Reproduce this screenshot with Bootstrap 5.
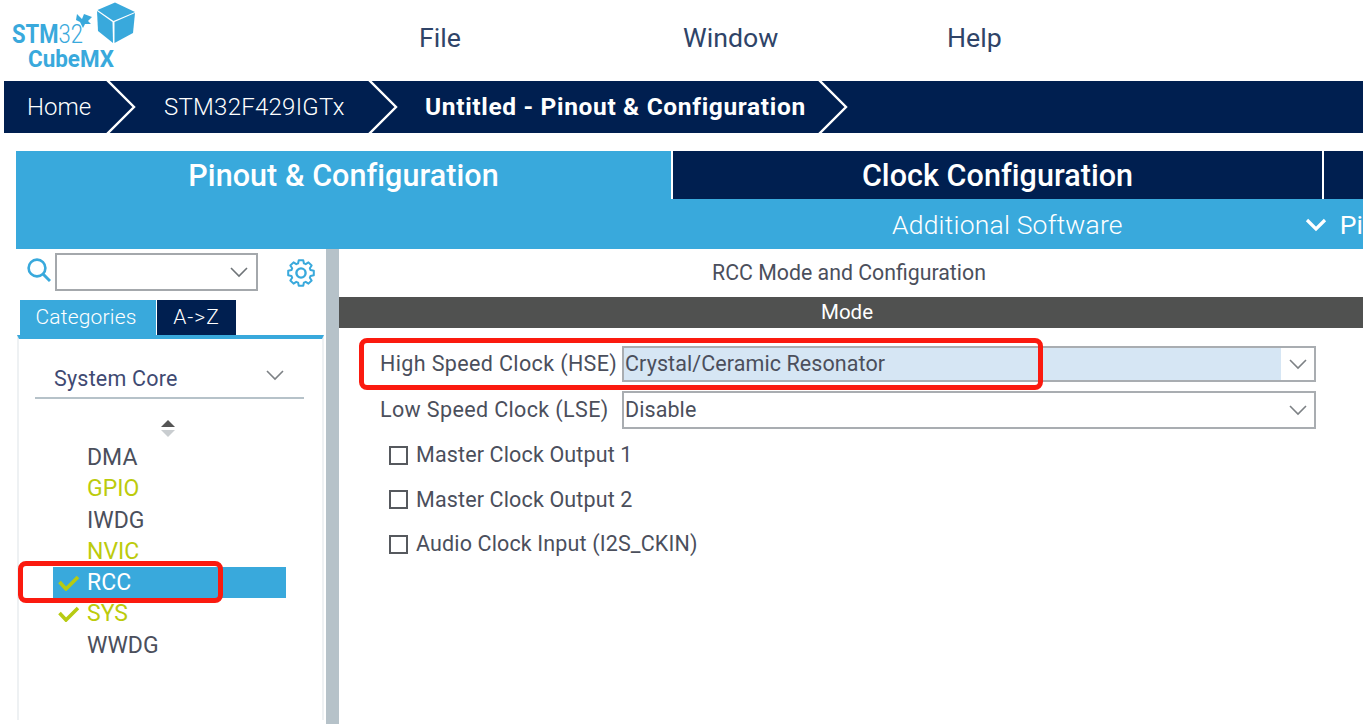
<!DOCTYPE html>
<html lang="en">
<head>
    <meta charset="UTF-8">
    <meta name="viewport" content="width=device-width, initial-scale=1.0">
    <title>STM32CubeMX</title>
    <link href="https://cdn.jsdelivr.net/npm/bootstrap@5.3.0/dist/css/bootstrap.min.css" rel="stylesheet">
    <style>
        html, body { height: 100%; overflow: hidden; }
        body { background: #fff; font-family: Roboto, "Liberation Sans", sans-serif; color: #4b4f5c; }
        .app-head { height: 81px; }
        .logo-box { width: 140px; height: 81px; margin-left: 8px; flex: none; }
        .menu-item { font-size: 26.7px; color: #2f4468; position: absolute; top: 19px; line-height: 38px; }
        .menu-bar { position: relative; flex: 1; }
        .crumbs { height: 52px; margin-left: 4px; background: #001f50; color: #fff; font-size: 24px; font-weight: 300; line-height: 52px; overflow: hidden; }
        .crumb { display: flex; align-items: stretch; flex: none; white-space: nowrap; }
        .crumb svg { display: block; flex: none; width: 30px; height: 52px; }
        .crumb-home { padding-left: 23px; width: 102px; }
        .crumb-chip { padding-left: 28px; width: 232px; letter-spacing: .25px; }
        .crumb-active { font-weight: 700; font-size: 24.5px; letter-spacing: .66px; }
        .crumb-title { padding-left: 27px; width: 420px; }
        .main-tabs { margin: 18px 0 0 16px; height: 48px; font-size: 30.5px; font-weight: 500; color: #fff; line-height: 49px; letter-spacing: .05px; overflow: hidden; }
        .tab-on { width: 655px; background: #39a9dc; text-align: center; flex: none; }
        .tab-off { background: #001f50; text-align: center; flex: none; margin-left: 2px; }
        .tab-clock { width: 649px; }
        .tab-rest { flex: 1; }
        .sub-tabs { margin-left: 16px; height: 50px; padding-top: 2px; background: #39a9dc; color: #fff; font-size: 26.5px; overflow: hidden; }
        .sub-label { margin-left: 876px; white-space: nowrap; font-weight: 300; letter-spacing: .2px; }
        .sub-pi { margin-left: 13px; white-space: nowrap; }
        .sub-chev { width: 22px; height: 14px; margin-left: 182px; flex: none; }
        .work { margin-left: 16px; height: 475px; }
        .side { width: 310px; flex: none; }
        .side-gutter { width: 13px; flex: none; background: #b6c2c9; }
        .side-top { height: 51px; padding: 4px 0 0 11px; }
        .combo { width: 203px; height: 38px; margin-left: 4px; border: 2px solid #a4a8ac; }
        .gear { margin-left: 29px; margin-top: 6px; flex: none; }
        .side-tabs { height: 35px; margin-left: 4px; font-size: 21px; line-height: 35px; color: #fff; font-weight: 300; }
        .side-tab-a { width: 136px; background: #39a9dc; text-align: center; letter-spacing: .2px; padding-right: 4px; }
        .side-tab-b { width: 79px; background: #001f50; text-align: center; margin-left: 1px; letter-spacing: 1px; }
        .side-body { margin-left: 1px; margin-right: 2px; border-top: 4px solid #39a9dc; border-left: 2px solid #eef1f3; border-right: 2px solid #eef1f3; height: 385px; }
        .group-line { margin: 21px 18px 0 16px; height: 39px; border-bottom: 2px solid #b6c2c9; padding-left: 19px; font-size: 21.5px; line-height: 37px; color: #3f4a72; letter-spacing: .2px; }
        .group-chev { margin: 10px 20px 0 0; }
        .sort-arrows { margin: 21px 0 0 142px; display: block; }
        .items { margin: 5px 0 0 0; font-size: 23px; line-height: 31.3px; }
        .item { height: 31.3px; padding-left: 68px; position: relative; width: 267px; }
        .item-on { margin-left: 34px; padding-left: 34px; width: 233px; background: #39a9dc; color: #fff; }
        .item-lime { color: #bccb0c; }
        .item-check { position: absolute; left: 5px; top: 8px; }
        .item-check-off { left: 39px; }
        .panel { flex: 1; min-width: 0; }
        .panel-title { height: 48px; line-height: 48px; font-size: 21.3px; font-weight: 400; text-align: center; padding-right: 4px; }
        .mode-bar { height: 31px; background: #505150; color: #fff; text-align: center; font-size: 20.5px; line-height: 31px; padding-right: 8px; }
        .cfg-rows { padding: 18px 0 0 41px; font-size: 21.5px; letter-spacing: .37px; }
        .cfg-row { height: 36px; margin-bottom: 9px; }
        .cfg-row-low { height: 38px; margin-bottom: 0; }
        .cfg-label { width: 242px; flex: none; white-space: nowrap; line-height: 36px; }
        .cfg-row-low .cfg-label { line-height: 38px; }
        .cfg-select { width: 694px; flex: none; border: 2px solid #a9adb1; display: flex; align-items: center; }
        .cfg-value { flex: 1; height: 100%; padding-left: 1px; line-height: 32px; white-space: nowrap; letter-spacing: .08px; }
        .cfg-row-low .cfg-value { line-height: 34px; }
        .cfg-value-on { background: #d6e6f4; }
        .cfg-arrow { width: 33px; flex: none; }
        .cfg-arrow svg { display: block; margin: 0 auto; }
        .cfg-checks { padding-top: 4px; letter-spacing: .14px; }
        .cfg-check { height: 44.5px; padding-left: 9px; gap: 8px; }
        .cfg-box { width: 19px; height: 19px; border: 2px solid #56595e; flex: none; }
        .mark-red { position: absolute; border: 5px solid #fb1a0f; border-radius: 8px; pointer-events: none; }
        .mark-rcc { left: 18px; top: 561px; width: 205px; height: 42px; }
        .mark-hse { left: 359px; top: 338px; width: 684px; height: 52px; }
    </style>
</head>
<body>
    <header class="app-head d-flex">
        <div class="logo-box">
            <svg width="130" height="75" viewBox="0 0 130 75" role="img" aria-label="STM32 CubeMX">
                <text x="4" y="43" fill="#39a9dc" font-family="Roboto" font-size="25" textLength="71" lengthAdjust="spacingAndGlyphs"><tspan font-weight="700">STM</tspan><tspan font-weight="300">32</tspan></text>
                <text x="20" y="67" fill="#39a9dc" font-family="Roboto" font-size="24" font-weight="700" textLength="86" lengthAdjust="spacingAndGlyphs">CubeMX</text>
                <path d="M69 14 L74 19 L76 14 L84 17 L80 21 L83 24 L77 24 L75 28 L72 22 L68 20 Z" fill="#39a9dc"/>
                <path d="M89.5 10 L107 2.500 L127 12 L105.500 21 Z" fill="#39a9dc"/>
                <path d="M89 11 L104.500 22 L105 43 L90 31 Z" fill="#39a9dc"/>
                <path d="M106.500 22 L127 13 L125 33 L106.500 43 Z" fill="#39a9dc"/>
            </svg>
        </div>
        <nav class="menu-bar">
            <span class="menu-item" style="left:271px">File</span>
            <span class="menu-item" style="left:535px">Window</span>
            <span class="menu-item" style="left:799px">Help</span>
        </nav>
    </header>

    <nav class="crumbs d-flex">
        <div class="crumb"><span class="crumb-home">Home</span>
            <svg viewBox="0 0 30 52"><path d="M1 -1 L28 26 L1 53" fill="none" stroke="#fff" stroke-width="2.4"/></svg></div>
        <div class="crumb"><span class="crumb-chip">STM32F429IGTx</span>
            <svg viewBox="0 0 30 52"><path d="M1 -1 L28 26 L1 53" fill="none" stroke="#fff" stroke-width="2.4"/></svg></div>
        <div class="crumb crumb-active"><span class="crumb-title">Untitled - Pinout &amp; Configuration</span>
            <svg viewBox="0 0 30 52"><path d="M1 -1 L28 26 L1 53" fill="none" stroke="#fff" stroke-width="2.4"/></svg></div>
    </nav>

    <div class="main-tabs d-flex">
        <div class="tab-on">Pinout &amp; Configuration</div>
        <div class="tab-off tab-clock">Clock Configuration</div>
        <div class="tab-off tab-rest"></div>
    </div>
    <div class="sub-tabs d-flex align-items-center">
        <span class="sub-label">Additional Software</span>
        <svg class="sub-chev" viewBox="0 0 22 14"><path d="M2 2 L11 11 L20 2" fill="none" stroke="#fff" stroke-width="3.2"/></svg>
        <span class="sub-pi">Pinout</span>
    </div>

    <div class="work d-flex">
        <aside class="side">
            <div class="side-top d-flex align-items-start">
                <svg width="24" height="27" viewBox="0 0 24 27" class="mt-1 flex-shrink-0"><circle cx="10" cy="11" r="8.4" fill="none" stroke="#39a9dc" stroke-width="2.6"/><path d="M16 17 L23 24" stroke="#39a9dc" stroke-width="3"/></svg>
                <div class="combo d-flex align-items-center justify-content-end pe-2">
                    <svg width="18" height="11" viewBox="0 0 18 11"><path d="M1 1 L9 9 L17 1" fill="none" stroke="#6f7478" stroke-width="1.6"/></svg>
                </div>
                <svg class="gear" width="28" height="28" viewBox="0 0 28 28"><path d="M23.56 11.08 L26.8 11.74 L26.8 16.26 L23.56 16.92 L22.83 18.69 L24.65 21.45 L21.45 24.65 L18.69 22.83 L16.92 23.56 L16.26 26.8 L11.74 26.8 L11.08 23.56 L9.31 22.83 L6.55 24.65 L3.35 21.45 L5.17 18.69 L4.44 16.92 L1.2 16.26 L1.2 11.74 L4.44 11.08 L5.17 9.31 L3.35 6.55 L6.55 3.35 L9.31 5.17 L11.08 4.44 L11.74 1.2 L16.26 1.2 L16.92 4.44 L18.69 5.17 L21.45 3.35 L24.65 6.55 L22.83 9.31 Z" fill="none" stroke="#39a9dc" stroke-width="2" stroke-linejoin="round"/><circle cx="14" cy="14" r="4.6" fill="none" stroke="#39a9dc" stroke-width="2.4"/></svg>
            </div>
            <div class="side-tabs d-flex">
                <div class="side-tab-a">Categories</div>
                <div class="side-tab-b">A-&gt;Z</div>
            </div>
            <div class="side-body">
                <div class="group-line d-flex justify-content-between">
                    <span>System Core</span>
                    <svg class="group-chev" width="18" height="11" viewBox="0 0 18 11"><path d="M1 1 L9 9 L17 1" fill="none" stroke="#7d8185" stroke-width="1.6"/></svg>
                </div>
                <svg class="sort-arrows" width="14" height="17" viewBox="0 0 14 17"><path d="M7 0 L14 7 H0 Z" fill="#555"/><path d="M7 17 L0 10 H14 Z" fill="#c9cdd0"/></svg>
                <ul class="items list-unstyled mb-0">
                    <li class="item">DMA</li>
                    <li class="item item-lime">GPIO</li>
                    <li class="item">IWDG</li>
                    <li class="item item-lime">NVIC</li>
                    <li class="item item-on"><svg class="item-check" width="21" height="16" viewBox="0 0 21 16"><path d="M1.5 7 L8 14 L20 2" fill="none" stroke="#b7cb12" stroke-width="3.6"/></svg>RCC</li>
                    <li class="item item-lime"><svg class="item-check item-check-off" width="21" height="16" viewBox="0 0 21 16"><path d="M1.5 7 L8 14 L20 2" fill="none" stroke="#b7cb12" stroke-width="3.6"/></svg>SYS</li>
                    <li class="item">WWDG</li>
                </ul>
            </div>
        </aside>
        <div class="side-gutter"></div>
        <main class="panel">
            <div class="panel-title">RCC Mode and Configuration</div>
            <div class="mode-bar">Mode</div>
            <div class="cfg-rows">
                <div class="cfg-row d-flex">
                    <div class="cfg-label">High Speed Clock (HSE)</div>
                    <div class="cfg-select">
                        <div class="cfg-value cfg-value-on">Crystal/Ceramic Resonator</div>
                        <div class="cfg-arrow"><svg width="18" height="11" viewBox="0 0 18 11"><path d="M1 1 L9 9 L17 1" fill="none" stroke="#7d8185" stroke-width="1.6"/></svg></div>
                    </div>
                </div>
                <div class="cfg-row cfg-row-low d-flex">
                    <div class="cfg-label">Low Speed Clock (LSE)</div>
                    <div class="cfg-select">
                        <div class="cfg-value">Disable</div>
                        <div class="cfg-arrow"><svg width="18" height="11" viewBox="0 0 18 11"><path d="M1 1 L9 9 L17 1" fill="none" stroke="#7d8185" stroke-width="1.6"/></svg></div>
                    </div>
                </div>
                <div class="cfg-checks">
                    <div class="cfg-check d-flex align-items-center"><span class="cfg-box"></span><span>Master Clock Output 1</span></div>
                    <div class="cfg-check d-flex align-items-center"><span class="cfg-box"></span><span>Master Clock Output 2</span></div>
                    <div class="cfg-check d-flex align-items-center"><span class="cfg-box"></span><span>Audio Clock Input (I2S_CKIN)</span></div>
                </div>
            </div>
        </main>
    </div>

    <div class="mark-red mark-rcc"></div>
    <div class="mark-red mark-hse"></div>
    <script src="https://cdn.jsdelivr.net/npm/bootstrap@5.3.0/dist/js/bootstrap.bundle.min.js"></script>
</body>
</html>
